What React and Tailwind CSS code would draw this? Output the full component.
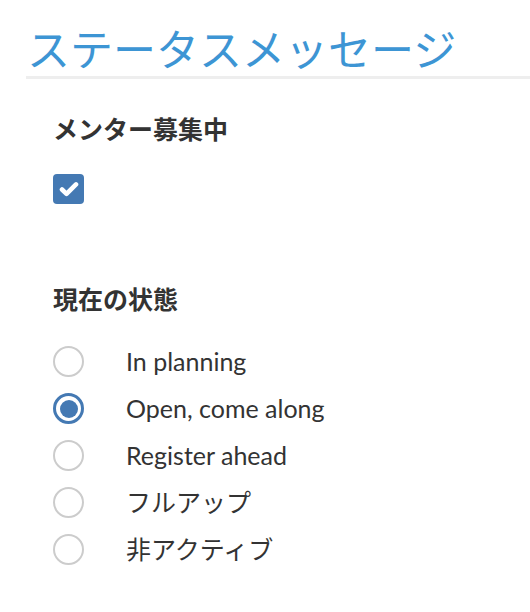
import React, { useState } from 'react';

const statusOptions = ['In planning', 'Open, come along', 'Register ahead', 'フルアップ', '非アクティブ'];

const fontStack = { fontFamily: 'Lato, "Noto Sans CJK JP", sans-serif' };

const RadioRow = ({ label, checked, onSelect }) => (
    <label className="flex h-[47px] cursor-pointer items-center" onClick={onSelect}>
        {checked ? (
            <span className="flex h-[31px] w-[31px] items-center justify-center rounded-full border-[3px] border-[#4479b3] bg-white">
                <span className="h-[18px] w-[18px] rounded-full bg-[#4479b3]" />
            </span>
        ) : (
            <span className="h-[31px] w-[31px] rounded-full border-2 border-[#cccccc] bg-white" />
        )}
        <span className="ml-[42px] text-[25px] leading-none text-[#333333]">{label}</span>
    </label>
);

const App = () => {
    const [mentor, setMentor] = useState(true);
    const [status, setStatus] = useState(1);

    return (
        <div className="min-h-[612px] bg-white pl-[26px]" style={fontStack}>
            <h1 className="border-b-[3px] border-[#eeeeee] pt-[26px] pb-[3px] pl-[1px] text-[43px] leading-[1.1] font-normal text-[#3d95d4]">
                ステータスメッセージ
            </h1>
            <div className="pl-[27px]">
                <h3 className="mt-[34px] text-[25px] leading-[32px] font-bold text-[#333333]">メンター募集中</h3>
                <button
                    type="button"
                    onClick={() => setMentor(!mentor)}
                    className={`mt-[29px] flex h-[30px] w-[31px] items-center justify-center rounded-[4px] ${
                        mentor ? 'bg-[#4479b3]' : 'border-2 border-[#cccccc] bg-white'
                    }`}
                >
                    {mentor && (
                        <svg width="20" height="16" viewBox="0 0 20 16">
                            <path d="M3 8.5 L7.5 12.8 L17 3.4" fill="none" stroke="white" strokeWidth="4.6" strokeLinecap="round" strokeLinejoin="round" />
                        </svg>
                    )}
                </button>
                <h3 className="mt-[79px] text-[25px] leading-[32px] font-bold text-[#333333]">現在の状態</h3>
                <div className="mt-[23px] flex flex-col">
                    {statusOptions.map((opt, i) => (
                        <RadioRow key={opt} label={opt} checked={status === i} onSelect={() => setStatus(i)} />
                    ))}
                </div>
            </div>
        </div>
    );
};

export default App;
